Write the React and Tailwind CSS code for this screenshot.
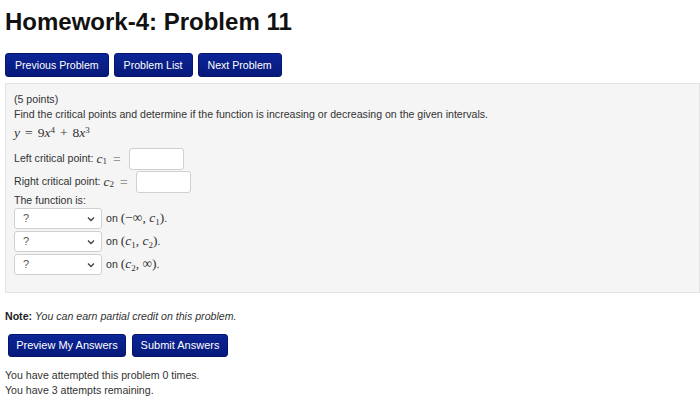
import React from 'react'

const serif = { fontFamily: '"Liberation Serif", "DejaVu Serif", serif' }

const NavButton = ({ text }) => (
       <button className="h-[24px] px-[9px] rounded-[3px] bg-gradient-to-b from-[#0c2596] to-[#07197a] text-white text-[10.6px] leading-none border border-[#06166e]">
              {text}
       </button>
)

const Chevron = () => (
       <svg width="8" height="6" viewBox="0 0 8 6" className="text-[#444]">
              <path d="M1 1.5 L4 4.5 L7 1.5" fill="none" stroke="currentColor" strokeWidth="1.4" />
       </svg>
)

const QSelect = ({ children }) => (
       <div className="flex items-center gap-[4px]">
              <div className="w-[88px] h-[21px] bg-white border border-[#d0d0d0] rounded-[3px] flex items-center justify-between pl-[8px] pr-[6px]">
                     <span className="text-[#555] text-[11px]">?</span>
                     <Chevron />
              </div>
              <span className="text-[10.6px] text-[#333]">on {children}.</span>
       </div>
)

const M = ({ children }) => (
       <span className="italic text-[13.5px]" style={serif}>{children}</span>
)

const R = ({ children, className = '' }) => (
       <span className={`text-[13.5px] ${className}`} style={serif}>{children}</span>
)

const Sub = ({ n }) => (
       <sub className="text-[9px]" style={serif}>{n}</sub>
)

const App = () => {
       return (
              <div className="w-[700px] h-[417px] bg-white overflow-hidden text-[#222]" style={{ fontFamily: '"Liberation Sans", Arial, sans-serif' }}>
                     {/* Title */}
                     <h1 className="pl-[5px] pt-[8px] h-[45px] text-[24px] font-bold text-[#111] leading-[28px]">Homework-4: Problem 11</h1>

                     {/* Nav buttons */}
                     <div className="flex gap-[5px] pl-[5px] mt-[8px]">
                            <NavButton text="Previous Problem" />
                            <NavButton text="Problem List" />
                            <NavButton text="Next Problem" />
                     </div>

                     {/* Problem panel */}
                     <div className="ml-[5px] mt-[6px] h-[210px] bg-[#f5f5f5] border border-[#e4e4e4] pl-[8px] pt-[8px] text-[10.6px] text-[#333]">
                            <div className="leading-[15px]">(5 points)</div>
                            <div className="leading-[15px]">Find the critical points and determine if the function is increasing or decreasing on the given intervals.</div>
                            <div className="leading-[20px] mt-[1px]">
                                   <M>y</M><R className="mx-[5px]">=</R><R>9</R><M>x</M><sup className="text-[9px]" style={serif}>4</sup><R className="mx-[5px]">+</R><R>8</R><M>x</M><sup className="text-[9px]" style={serif}>3</sup>
                            </div>

                            <div className="flex items-center mt-[5px] h-[22px]">
                                   <span>Left critical point:&nbsp;</span>
                                   <M>c</M><Sub n="1" />
                                   <span className="text-[13px] text-[#999] ml-[6px] mr-[8px]">=</span>
                                   <div className="w-[55px] h-[22px] bg-white border border-[#d0d0d0] rounded-[3px]" />
                            </div>
                            <div className="flex items-center mt-[1px] h-[22px]">
                                   <span>Right critical point:&nbsp;</span>
                                   <M>c</M><Sub n="2" />
                                   <span className="text-[13px] text-[#999] ml-[6px] mr-[8px]">=</span>
                                   <div className="w-[55px] h-[22px] bg-white border border-[#d0d0d0] rounded-[3px]" />
                            </div>
                            <div className="leading-[15px]">The function is:</div>
                            <div className="flex flex-col gap-[2px]">
                                   <QSelect><R>(−∞, </R><M>c</M><Sub n="1" /><R>)</R></QSelect>
                                   <QSelect><R>(</R><M>c</M><Sub n="1" /><R>, </R><M>c</M><Sub n="2" /><R>)</R></QSelect>
                                   <QSelect><R>(</R><M>c</M><Sub n="2" /><R>, ∞)</R></QSelect>
                            </div>
                     </div>

                     {/* Note */}
                     <div className="pl-[5px] mt-[16px] text-[10.6px] text-[#222] leading-[15px]">
                            <span className="font-bold">Note:</span> <span className="italic text-[#333]">You can earn partial credit on this problem.</span>
                     </div>

                     {/* Submit buttons */}
                     <div className="flex gap-[6px] pl-[8px] mt-[10px]">
                            <button className="h-[23px] w-[118px] rounded-[3px] bg-gradient-to-b from-[#0c2596] to-[#07197a] text-white text-[11px] leading-none border border-[#06166e]">Preview My Answers</button>
                            <button className="h-[23px] w-[96px] rounded-[3px] bg-gradient-to-b from-[#0c2596] to-[#07197a] text-white text-[11px] leading-none border border-[#06166e]">Submit Answers</button>
                     </div>

                     <div className="pl-[5px] mt-[11px] text-[10.6px] text-[#333] leading-[15px]">
                            <div>You have attempted this problem 0 times.</div>
                            <div>You have 3 attempts remaining.</div>
                     </div>
              </div>
       )
}

export default App
